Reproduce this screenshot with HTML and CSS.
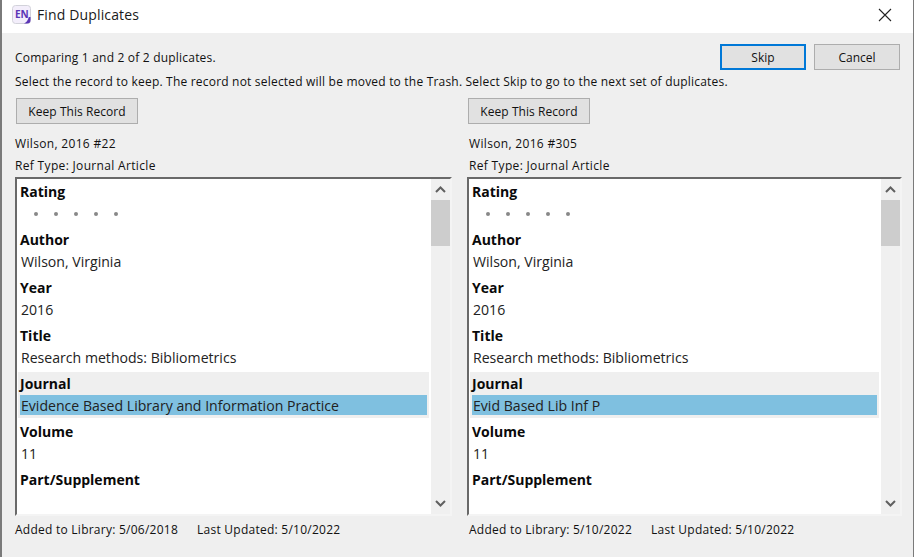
FILE: index.html
```html
<!DOCTYPE html>
<html lang="en">
<head>
<meta charset="utf-8">
<title>Find Duplicates</title>
<link rel="stylesheet" href="styles.css">
</head>
<body>
<div class="window">
  <header class="titlebar">
    <svg class="app-icon" width="20" height="20" viewBox="0 0 20 20">
      <rect x="0.5" y="0.5" width="18" height="18" rx="3" fill="#f3eefb" stroke="#d2d2da"/>
      <path d="M18.5 12 L18.5 15 Q18.5 18.5 15 18.5 L12 18.5 Q15.5 17 16.8 12 Z" fill="#5b35b5"/>
      <text x="3" y="12.5" class="app-icon-text">EN</text>
    </svg>
    <span class="title">Find Duplicates</span>
    <svg class="close" width="14" height="14" viewBox="0 0 14 14"><path d="M1 1 L13 13 M13 1 L1 13" stroke="#222" stroke-width="1.1" fill="none"/></svg>
  </header>
  <main class="content">
    <div class="top">
      <div class="messages">
        <p class="msg first">Comparing 1 and 2 of 2 duplicates.</p>
        <p class="msg">Select the record to keep. The record not selected will be moved to the Trash. Select Skip to go to the next set of duplicates.</p>
      </div>
      <div class="actions">
        <button class="btn action default">Skip</button>
        <button class="btn action">Cancel</button>
      </div>
    </div>
    <div class="columns">
      <section class="record left">
        <button class="btn keep">Keep This Record</button>
        <p class="meta id">Wilson, 2016 #22</p>
        <p class="meta type">Ref Type: Journal Article</p>
        <div class="listbox">
          <div class="fields">
            <div class="label">Rating</div>
            <div class="value dots"><i></i><i></i><i></i><i></i><i></i></div>
            <div class="label">Author</div>
            <div class="value">Wilson, Virginia</div>
            <div class="label">Year</div>
            <div class="value">2016</div>
            <div class="label">Title</div>
            <div class="value">Research methods: Bibliometrics</div>
            <div class="diff">
              <div class="label">Journal</div>
              <div class="value hl">Evidence Based Library and Information Practice</div>
            </div>
            <div class="label">Volume</div>
            <div class="value">11</div>
            <div class="label">Part/Supplement</div>
          </div>
          <div class="scrollbar">
            <svg class="arrow" width="19" height="21" viewBox="0 0 19 21"><path d="M5 13 L9.5 8.5 L14 13" stroke="#606060" stroke-width="2" fill="none"/></svg>
            <div class="thumb"></div>
            <div class="track"></div>
            <svg class="arrow" width="19" height="21" viewBox="0 0 19 21"><path d="M5 8 L9.5 12.5 L14 8" stroke="#606060" stroke-width="2" fill="none"/></svg>
          </div>
        </div>
        <p class="meta foot"><span>Added to Library: 5/06/2018</span><span>Last Updated: 5/10/2022</span></p>
      </section>
      <section class="record right">
        <button class="btn keep">Keep This Record</button>
        <p class="meta id">Wilson, 2016 #305</p>
        <p class="meta type">Ref Type: Journal Article</p>
        <div class="listbox">
          <div class="fields">
            <div class="label">Rating</div>
            <div class="value dots"><i></i><i></i><i></i><i></i><i></i></div>
            <div class="label">Author</div>
            <div class="value">Wilson, Virginia</div>
            <div class="label">Year</div>
            <div class="value">2016</div>
            <div class="label">Title</div>
            <div class="value">Research methods: Bibliometrics</div>
            <div class="diff">
              <div class="label">Journal</div>
              <div class="value hl">Evid Based Lib Inf P</div>
            </div>
            <div class="label">Volume</div>
            <div class="value">11</div>
            <div class="label">Part/Supplement</div>
          </div>
          <div class="scrollbar">
            <svg class="arrow" width="19" height="21" viewBox="0 0 19 21"><path d="M5 13 L9.5 8.5 L14 13" stroke="#606060" stroke-width="2" fill="none"/></svg>
            <div class="thumb"></div>
            <div class="track"></div>
            <svg class="arrow" width="19" height="21" viewBox="0 0 19 21"><path d="M5 8 L9.5 12.5 L14 8" stroke="#606060" stroke-width="2" fill="none"/></svg>
          </div>
        </div>
        <p class="meta foot"><span>Added to Library: 5/10/2022</span><span>Last Updated: 5/10/2022</span></p>
      </section>
    </div>
  </main>
</div>
</body>
</html>
```
FILE: styles.css
```css
* { box-sizing: border-box; }
html, body { margin: 0; padding: 0; width: 100%; height: 100%; background: #fff; overflow: hidden; }
body { font-family: "Open Sans", "Noto Sans", sans-serif; color: #111; }
p { margin: 0; }
.window {
  width: 914px; height: 557px;
  border-left: 2px solid #7a7a7a;
  border-right: 1px solid #7a7a7a;
  display: flex; flex-direction: column;
}
.titlebar {
  height: 33px; background: #fff; flex: none;
  display: flex; align-items: center;
  padding: 0 21px 0 10px;
}
.app-icon { flex: none; margin-top: -3px; }
.app-icon-text { font: 700 10px "Open Sans", sans-serif; fill: #5b35b5; }
.title { font-size: 14px; letter-spacing: .14px; margin-left: 5px; margin-top: -5px; flex: 1; color: #1a1a1a; }
.close { flex: none; margin-top: -3px; }
.content { flex: 1; background: #efefef; padding: 11px 13px 0 13px; }
.top { display: flex; justify-content: space-between; height: 54px; }
.messages { padding-top: 2px; flex: 1; min-width: 0; }
.msg { font-size: 12px; letter-spacing: .2px; line-height: 24px; height: 24px; white-space: nowrap; }
.actions { display: flex; gap: 8px; flex: none; }
.btn {
  font-family: inherit; font-size: 12px; color: #111;
  background: #e1e1e1; border: 1px solid #adadad; padding: 0;
}
.action { width: 86px; height: 26px; }
.action.default { border: 2px solid #0078d7; }
.columns { display: flex; gap: 15px; }
.record { width: 437px; flex: none; }
.record.right { width: 435px; }
.keep { width: 122px; height: 26px; display: block; margin-left: 1px; letter-spacing: .05px; }
.meta { font-size: 12px; line-height: 20px; letter-spacing: .33px; white-space: nowrap; }
.id { margin-top: 10px; }
.type { margin-top: 2px; }
.right .meta { padding-left: 2px; }
.listbox {
  margin-top: 1px; height: 339px;
  background: #fff;
  border-top: 2px solid #696969; border-left: 2px solid #696969;
  border-right: 2px solid #f4f4f4; border-bottom: 2px solid #f4f4f4;
  display: flex;
}
.fields { flex: 1; padding: 1px 2px 0 1px; overflow: hidden; font-size: 14.1px; }
.label { font-weight: 700; font-size: 14px; height: 24px; line-height: 24px; padding-left: 2px; color: #0a0a0a; white-space: nowrap; }
.value { height: 24px; line-height: 20px; padding-left: 3px; white-space: nowrap; color: #222; }
.dots { display: flex; align-items: center; gap: 16px; padding-left: 16px; padding-bottom: 4px; }
.dots i { width: 4px; height: 4px; border-radius: 50%; background: #888; }
.diff { background: #efefef; height: 46px; margin-bottom: 2px; }
.diff .label { height: 23px; }
.diff .value.hl { background: #7fc0e0; height: 20px; line-height: 21px; margin: 0 2px; padding-left: 1px; }
.scrollbar { width: 19px; flex: none; background: #f0f0f0; display: flex; flex-direction: column; }
.arrow { display: block; flex: none; }
.thumb { height: 46px; background: #cdcdcd; flex: none; }
.track { flex: 1; }
.foot { margin-top: 4px; display: flex; letter-spacing: .25px; }
.foot span:first-child { width: 182px; flex: none; }
```
